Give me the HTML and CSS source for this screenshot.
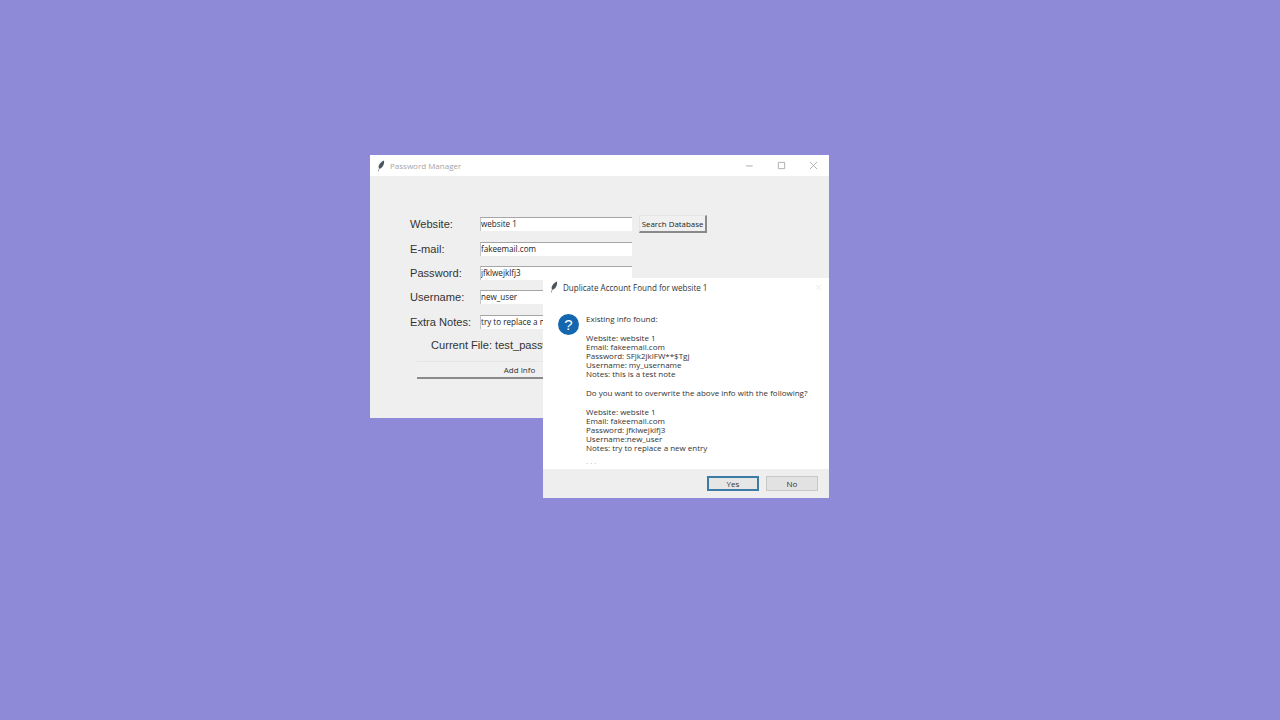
FILE: index.html
```html
<!DOCTYPE html>
<html lang="en">

<head>
    <meta charset="UTF-8">
    <meta name="viewport" content="width=device-width, initial-scale=1.0">
    <title>Password Manager</title>

    <link rel="stylesheet" href="styles.css">
</head>

<body>

    <div class="window main-window">
        <div class="titlebar">
            <svg class="feather" viewBox="0 0 8 12"><path d="M1.2 11.5 C1.6 9.5 1.8 9 2 8.2 C0.8 6.5 2.6 2.2 7 0.4 C7.6 3.6 6 7.4 3 8.6 L2.3 8.8 L1.7 11.5 Z" /></svg>
            <span class="title-text">Password Manager</span>
            <div class="controls">
                <svg viewBox="0 0 10 10"><path d="M1 5.5 H8.5" /></svg>
                <svg viewBox="0 0 10 10"><path d="M1.5 1.5 H8.5 V8.5 H1.5 Z" /></svg>
                <svg viewBox="0 0 10 10"><path d="M1 1 L9 9 M9 1 L1 9" /></svg>
            </div>
        </div>
        <div class="form">
            <div class="row">
                <label>Website:</label>
                <input class="field" type="text" value="website 1" readonly>
                <button class="search-btn">Search Database</button>
            </div>
            <div class="row">
                <label>E-mail:</label>
                <input class="field" type="text" value="fakeemail.com" readonly>
            </div>
            <div class="row">
                <label>Password:</label>
                <input class="field" type="text" value="jfklwejklfj3" readonly>
            </div>
            <div class="row">
                <label>Username:</label>
                <input class="field" type="text" value="new_user" readonly>
            </div>
            <div class="row">
                <label>Extra Notes:</label>
                <input class="field" type="text" value="try to replace a new entry" readonly>
            </div>
            <p class="current-file">Current File: test_passwords.json</p>
            <button class="add-btn">Add Info</button>
        </div>
    </div>

    <div class="window dialog">
        <div class="dialog-title">
            <svg class="feather" viewBox="0 0 8 12"><path d="M1.2 11.5 C1.6 9.5 1.8 9 2 8.2 C0.8 6.5 2.6 2.2 7 0.4 C7.6 3.6 6 7.4 3 8.6 L2.3 8.8 L1.7 11.5 Z" /></svg>
            <span>Duplicate Account Found for website 1</span>
            <svg class="dialog-close" viewBox="0 0 10 10"><path d="M1 1 L9 9 M9 1 L1 9" /></svg>
        </div>
        <div class="dialog-body">
            <div class="question-icon">?</div>
            <div class="message">
                <p>Existing info found:</p>
                <p>Website: website 1<br>Email: fakeemail.com<br>Password: SFjk2jklFW**$Tgj<br>Username: my_username<br>Notes: this is a test note</p>
                <p>Do you want to overwrite the above info with the following?</p>
                <p>Website: website 1<br>Email: fakeemail.com<br>Password: jfklwejklfj3<br>Username:new_user<br>Notes: try to replace a new entry</p>
                <p class="faded">. . .</p>
            </div>
        </div>
        <div class="dialog-footer">
            <button class="dialog-btn default">Yes</button>
            <button class="dialog-btn">No</button>
        </div>
    </div>

</body>

</html>
```

FILE: styles.css
```css
* {
    margin: 0;
    padding: 0;
    box-sizing: border-box;
}

body {
    background-color: #8e8ad8;
    font-family: "Open Sans", sans-serif;
    height: 720px;
    overflow: hidden;
    position: relative;
}

.window {
    position: absolute;
}

/* main window */
.main-window {
    left: 370px;
    top: 155px;
    width: 459px;
    height: 263px;
    background-color: #efefef;
}

.titlebar {
    display: flex;
    align-items: center;
    height: 21px;
    background-color: #fff;
    padding-left: 7px;
}

.feather {
    width: 8px;
    height: 12px;
    fill: #4a5560;
    flex-shrink: 0;
}

.title-text {
    font-size: 8px;
    color: #a4a4a4;
    margin-left: 5px;
}

.controls {
    margin-left: auto;
    display: flex;
    gap: 23px;
    padding-right: 11px;
}

.controls svg,
.dialog-close {
    width: 9px;
    height: 9px;
    fill: none;
    stroke: #a8a8a8;
    stroke-width: 1;
}

.form {
    padding: 36px 0 0 40px;
}

.row {
    display: flex;
    align-items: center;
    height: 24.4px;
}

.row label {
    width: 70px;
    font-family: "Liberation Sans", Arial, sans-serif;
    font-size: 11.1px;
    color: #333;
}

.field {
    width: 152px;
    height: 14px;
    border: none;
    border-top: 1px solid #a5a5a5;
    border-left: 1px solid #c4c4c4;
    background-color: #fff;
    font-family: "Open Sans", sans-serif;
    font-size: 8.1px;
    color: #222;
    padding: 0 0 2px 0;
    outline: none;
}

.search-btn {
    margin-left: 7px;
    width: 68px;
    height: 18px;
    background-color: #f0f0f0;
    border: none;
    border-top: 1px solid #e4e4e4;
    border-left: 1px solid #e4e4e4;
    border-right: 2px solid #8a8a8a;
    border-bottom: 2px solid #8a8a8a;
    font-family: "Open Sans", sans-serif;
    font-size: 7.9px;
    color: #222;
    white-space: nowrap;
}

.current-file {
    font-family: "Liberation Sans", Arial, sans-serif;
    font-size: 11.1px;
    color: #333;
    margin: 5px 0 0 21px;
    white-space: nowrap;
}

.add-btn {
    display: block;
    margin: 10px 0 0 7px;
    width: 205px;
    height: 18px;
    background-color: #f0f0f0;
    border: none;
    border-top: 1px solid #e6e6e6;
    border-bottom: 2px solid #8a8a8a;
    font-family: "Open Sans", sans-serif;
    font-size: 8px;
    color: #333;
}

/* dialog */
.dialog {
    left: 543px;
    top: 278px;
    width: 286px;
    height: 220px;
    background-color: #fff;
    display: flex;
    flex-direction: column;
}

.dialog-title {
    display: flex;
    align-items: center;
    height: 18px;
    padding-left: 7px;
    font-size: 8.05px;
    color: #333;
}

.dialog-title span {
    margin-left: 5px;
}

.dialog-close {
    margin-left: auto;
    margin-right: 7px;
    width: 7px;
    height: 7px;
    stroke: #e2e2e2;
}

.dialog-body {
    flex: 1;
    display: flex;
    padding: 18px 0 0 15px;
    overflow: hidden;
}

.question-icon {
    width: 21px;
    height: 21px;
    border-radius: 50%;
    background-color: #1467ae;
    color: #fff;
    font-family: "Liberation Sans", Arial, sans-serif;
    font-size: 15px;
    line-height: 21px;
    text-align: center;
    flex-shrink: 0;
}

.message {
    margin-left: 7px;
    font-size: 8px;
    line-height: 9.2px;
    color: #333;
    white-space: nowrap;
}

.message p {
    margin-bottom: 9.4px;
}

.message .faded {
    margin-bottom: 0;
    margin-top: -6px;
    color: #bbb;
}

.dialog-footer {
    display: flex;
    justify-content: flex-end;
    align-items: center;
    gap: 7px;
    height: 29px;
    background-color: #eeeeee;
    padding-right: 11px;
}

.dialog-btn {
    width: 52px;
    height: 15px;
    background-color: #e2e2e2;
    border: 1px solid #c8c8c8;
    font-family: "Open Sans", sans-serif;
    font-size: 8px;
    color: #333;
}

.dialog-btn.default {
    border: 2px solid #3d7ba5;
    background-color: #e6e6e6;
}
```
